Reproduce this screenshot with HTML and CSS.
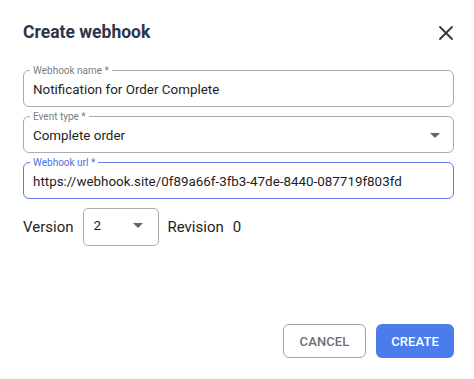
FILE: index.html
```html
<!DOCTYPE html>
<html>
<head>
<meta charset="utf-8">
<link rel="stylesheet" href="styles.css">
</head>
<body>
<div class="dialog">
  <div class="header">
    <h1 class="title">Create webhook</h1>
    <button class="close" aria-label="Close">
      <svg width="14" height="14" viewBox="0 0 14 14"><path d="M1 1L13 13M13 1L1 13" stroke="#2f3747" stroke-width="1.8" stroke-linecap="round" fill="none"/></svg>
    </button>
  </div>
  <div class="fields">
    <div class="field">
      <span class="label">Webhook name *</span>
      <span class="value">Notification for Order Complete</span>
    </div>
    <div class="field">
      <span class="label">Event type *</span>
      <span class="value">Complete order</span>
      <span class="arrow"></span>
    </div>
    <div class="field focused">
      <span class="label">Webhook url *</span>
      <span class="value">https://webhook.site/0f89a66f-3fb3-47de-8440-087719f803fd</span>
    </div>
  </div>
  <div class="version-row">
    <span class="text">Version</span>
    <div class="select">
      <span class="sel-value">2</span>
      <span class="arrow"></span>
    </div>
    <span class="text">Revision</span>
    <span class="text">0</span>
  </div>
  <div class="actions">
    <button class="btn cancel">CANCEL</button>
    <button class="btn create">CREATE</button>
  </div>
</div>
</body>
</html>
```

FILE: styles.css
```css
* { box-sizing: border-box; }
html, body { margin: 0; padding: 0; background: #ffffff; }
body { font-family: Roboto, "Liberation Sans", sans-serif; color: #1f1f1f; }
.dialog {
  width: 474px;
  height: 379px;
  padding: 21px 20px 0 23px;
  display: flex;
  flex-direction: column;
}
.header {
  display: flex;
  align-items: center;
  justify-content: space-between;
  height: 22px;
}
.title {
  margin: 0;
  font-family: Roboto, "Liberation Sans", sans-serif;
  font-size: 17.5px;
  font-weight: 700;
  color: #2d3648;
  line-height: 22px;
}
.close {
  border: 0;
  background: transparent;
  padding: 0;
  margin-top: 2px;
  margin-right: 1px;
  width: 14px;
  height: 14px;
  display: flex;
}
.fields {
  margin-top: 27px;
  display: flex;
  flex-direction: column;
  gap: 9px;
}
.field {
  position: relative;
  height: 37px;
  border: 1px solid #ababab;
  border-radius: 6px;
  display: flex;
  align-items: center;
  padding: 1px 9px 0 9px;
}
.field.focused { border-color: #5b7fe0; }
.label {
  position: absolute;
  top: -7px;
  left: 6px;
  padding: 0 3px;
  background: #ffffff;
  font-size: 10px;
  line-height: 13px;
  color: #7a7d83;
}
.field.focused .label { color: #4a72e0; }
.value {
  font-size: 13.4px;
  color: #1e1e1e;
  flex: 1;
  white-space: nowrap;
}
.arrow {
  width: 0;
  height: 0;
  border-left: 5px solid transparent;
  border-right: 5px solid transparent;
  border-top: 5px solid #666666;
}
.field .arrow { margin-right: 4px; }
.version-row {
  margin-top: 9px;
  display: flex;
  align-items: center;
  height: 38px;
}
.text {
  font-size: 15px;
  color: #1e1e1e;
}
.version-row .text:first-child { margin-right: 9px; }
.version-row .text + .text { margin-left: 9px; }
.select {
  width: 76px;
  height: 38px;
  border: 1px solid #ababab;
  border-radius: 5px;
  display: flex;
  align-items: center;
  justify-content: space-between;
  padding: 0 15px 4px 10px;
  margin-right: 9px;
}
.sel-value { font-size: 13.5px; color: #1e1e1e; }
.actions {
  margin-top: 78px;
  display: flex;
  justify-content: flex-end;
  gap: 10px;
}
.btn {
  height: 34px;
  border-radius: 6px;
  font-family: Roboto, "Liberation Sans", sans-serif;
  font-size: 13px;
  font-weight: 500;
  letter-spacing: 0.1px;
  padding: 0;
}
.cancel {
  width: 83px;
  background: #ffffff;
  border: 1px solid #9ea1a8;
  color: #6b6f78;
}
.create {
  width: 78px;
  background: #4a7cec;
  border: 0;
  color: #ffffff;
}
```
